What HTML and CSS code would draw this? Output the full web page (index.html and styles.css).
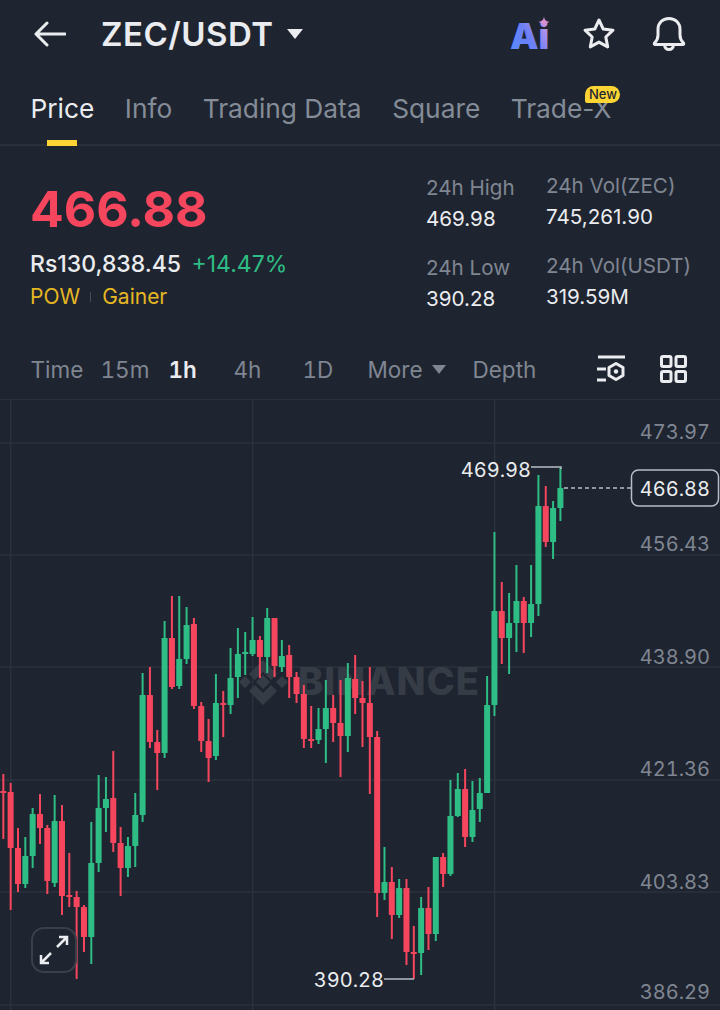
FILE: index.html
```html
<!DOCTYPE html>
<html lang="en">
<head>
  <meta charset="UTF-8" />
  <title>ZEC/USDT</title>
  <link rel="stylesheet" href="styles.css">
</head>
<body>

  <header class="topbar">
    <svg class="back-icon" width="32" height="26" viewBox="0 0 32 26">
      <path d="M13 2 2 13l11 11M2 13h29" />
    </svg>
    <h1 class="pair">ZEC/USDT</h1>
    <span class="caret caret-title"></span>
    <div class="top-icons">
      <div class="ai-logo">
        <svg width="46" height="46" viewBox="0 0 46 46">
          <defs>
            <linearGradient id="aiFill" x1="0" y1="1" x2="1" y2="0.2">
              <stop offset="0" stop-color="#4f8dff" />
              <stop offset="0.55" stop-color="#6f7ff5" />
              <stop offset="1" stop-color="#c99be8" />
            </linearGradient>
          </defs>
          <text x="1" y="38" class="ai-text" fill="url(#aiFill)">Ai</text>
          <path class="ai-spark" d="M35 5.500c.6 3.400 1.700 4.500 5.500 5.500-3.800 1-4.900 2.100-5.500 5.500-.6-3.400-1.700-4.500-5.500-5.500 3.800-1 4.900-2.100 5.500-5.500z" />
        </svg>
      </div>
      <svg class="line-icon star-icon" width="34" height="34" viewBox="0 0 34 34">
        <path d="M17 3l4.200 9 9.800 1.200-7.200 6.800 1.900 9.900L17 25.100l-8.700 4.800 1.900-9.900L3 13.200 12.800 12z" />
      </svg>
      <svg class="line-icon bell-icon" width="36" height="36" viewBox="0 0 36 36">
        <path d="M3.500 27c2.500-2.400 3.500-4.500 3.500-8v-5.500C7 7 11.500 2.500 18 2.500S29 7 29 13.500V19c0 3.500 1 5.600 3.500 8 .6.800.2 1.500-.8 1.500H4.300c-1 0-1.400-.7-.8-1.500zM13.500 29c.4 2.800 2.200 4.500 4.500 4.500s4.100-1.700 4.500-4.500" />
      </svg>
    </div>
  </header>

  <nav class="tabs">
    <a class="tab tab-active">Price</a>
    <a class="tab">Info</a>
    <a class="tab">Trading Data</a>
    <a class="tab">Square</a>
    <a class="tab tab-new">Trade-X<span class="new-badge">New</span></a>
  </nav>

  <section class="stats">
    <div class="stats-main">
      <div class="last-price">466.88</div>
      <div class="fiat-row">
        <span class="fiat">Rs130,838.45</span>
        <span class="change">+14.47%</span>
      </div>
      <div class="tag-row">
        <span>POW</span>
        <i class="tag-sep"></i>
        <span>Gainer</span>
      </div>
    </div>
    <div class="stats-col stats-col-a">
      <div class="stat-label">24h High</div>
      <div class="stat-value">469.98</div>
      <div class="stat-label stat-second">24h Low</div>
      <div class="stat-value">390.28</div>
    </div>
    <div class="stats-col stats-col-b">
      <div class="stat-label">24h Vol(ZEC)</div>
      <div class="stat-value">745,261.90</div>
      <div class="stat-label stat-second">24h Vol(USDT)</div>
      <div class="stat-value">319.59M</div>
    </div>
  </section>

  <div class="intervals">
    <span>Time</span>
    <span>15m</span>
    <span class="interval-active">1h</span>
    <span>4h</span>
    <span>1D</span>
    <span class="interval-more">More<span class="caret caret-more"></span></span>
    <span>Depth</span>
    <svg class="tool-icon" width="29" height="28" viewBox="0 0 29 28">
      <path d="M1 2h27M0 14h9M0 25h9" />
      <path d="M19 8.500l7 4v8l-7 4-7-4v-8z" />
      <circle class="tool-dot" cx="19" cy="16.500" r="2.200" />
    </svg>
    <svg class="tool-icon" width="27" height="28" viewBox="0 0 27 28">
      <rect x="1.500" y="1.500" width="9.500" height="10" rx="1.500" />
      <rect x="16" y="1.500" width="9.500" height="10" rx="1.500" />
      <rect x="1.500" y="16.500" width="9.500" height="10" rx="1.500" />
      <rect x="16" y="16.500" width="9.500" height="10" rx="1.500" />
    </svg>
  </div>

  <main class="chart">
    <svg id="chartSvg" class="chart-svg" width="720" height="610" viewBox="0 400 720 610"></svg>
    <button class="expand-btn">
      <svg width="32" height="32" viewBox="0 0 32 32">
        <path d="M19 13 29 3M21 3h8v8M13 19 3 29M3 21v8h8" />
      </svg>
    </button>
  </main>

  <script src="chart.js"></script>
</body>
</html>
```

FILE: styles.css
```css
* {
  margin: 0;
  padding: 0;
  box-sizing: border-box;
}

body {
  width: 720px;
  height: 1010px;
  overflow: hidden;
  background: #1f2530;
  font-family: Inter, 'Noto Sans', sans-serif;
  color: #eaecef;
}

/* top bar */
.topbar {
  display: flex;
  align-items: center;
  height: 68px;
  padding-left: 34px;
}

.back-icon path {
  fill: none;
  stroke: #eaecef;
  stroke-width: 3;
  stroke-linecap: round;
  stroke-linejoin: round;
}

.pair {
  margin-left: 35px;
  font-size: 33px;
  font-weight: 600;
  letter-spacing: 0.5px;
  line-height: 36px;
}

.caret {
  display: inline-block;
  width: 0;
  height: 0;
  border-style: solid;
  border-color: transparent;
  border-bottom-width: 0;
}

.caret-title {
  margin-left: 13px;
  border-width: 10px 8px 0;
  border-top-color: #eaecef;
}

.top-icons {
  display: flex;
  align-items: center;
  margin-left: auto;
  padding-right: 33px;
}

.ai-logo {
  display: flex;
  margin-right: 27px;
}

.ai-text {
  font-size: 36px;
  font-weight: 900;
}

.ai-spark {
  fill: #d78fd0;
}

.line-icon path {
  fill: none;
  stroke: #eaecef;
  stroke-width: 3;
  stroke-linejoin: round;
  stroke-linecap: round;
}

.bell-icon {
  margin-left: 35px;
}

/* tabs */
.tabs {
  display: flex;
  gap: 30.5px;
  height: 78px;
  padding: 23px 0 0 30.5px;
  border-bottom: 2px solid #2a303a;
}

.tab {
  position: relative;
  font-size: 26.3px;
  line-height: 36px;
  color: #848c98;
}

.tab-active {
  color: #eaecef;
}

.tab-active::after {
  content: "";
  position: absolute;
  left: 16px;
  bottom: -2px;
  width: 30px;
  height: 6px;
  background: #fcd535;
}

.new-badge {
  position: absolute;
  top: -5px;
  right: -9px;
  padding: 0 3.5px;
  border-radius: 9px 9px 9px 3px;
  background: #fcd535;
  color: #1f2530;
  font-size: 13px;
  font-weight: 500;
  line-height: 17px;
}

/* stats */
.stats {
  display: flex;
  height: 197px;
  padding-left: 30px;
}

.stats-main {
  width: 396px;
}

.last-price {
  margin-top: 32px;
  font-size: 50px;
  font-weight: 700;
  line-height: 62px;
  color: #f6465d;
}

.fiat-row {
  margin-top: 10px;
  font-size: 23px;
  line-height: 28px;
}

.fiat {
  font-weight: 500;
}

.change {
  margin-left: 4px;
  color: #2ebd85;
}

.tag-row {
  display: flex;
  align-items: center;
  margin-top: 5px;
  font-size: 21px;
  line-height: 28px;
  color: #e6b722;
}

.tag-sep {
  width: 1px;
  height: 10px;
  margin: 0 11px 0 10px;
  background: #474d57;
}

.stats-col {
  font-size: 20.6px;
  line-height: 28px;
}

.stats-col-a {
  width: 120px;
  padding-top: 28px;
}

.stats-col-b {
  padding-top: 26px;
}

.stat-label {
  color: #7f8692;
}

.stat-value {
  margin-top: 3px;
  color: #eaecef;
}

.stat-second {
  margin-top: 21px;
}

/* interval row */
.intervals {
  display: grid;
  grid-template-columns: 70px 68px 65px 69px 65px 105px 124px 63px 27px;
  align-items: center;
  height: 56px;
  padding: 0 0 4px 30.5px;
  font-size: 22.5px;
  font-variant-numeric: tabular-nums;
  color: #7f8692;
}

.interval-active {
  color: #eaecef;
  font-weight: 600;
}

.interval-more {
  display: flex;
  align-items: center;
}

.caret-more {
  margin-left: 9px;
  border-width: 9px 7px 0;
  border-top-color: #7f8692;
}

.tool-icon path,
.tool-icon rect {
  fill: none;
  stroke: #eaecef;
  stroke-width: 3;
  stroke-linejoin: round;
}

.tool-dot {
  fill: #eaecef;
}

/* chart */
.chart {
  position: relative;
  height: 611px;
  border-top: 1px solid #2a303a;
}

.chart-svg {
  display: block;
}

.grid-line {
  stroke: #2c323c;
  stroke-width: 1.500;
}

.wick-up,
.wick-down {
  stroke-width: 2;
}

.wick-up {
  stroke: #2ebd85;
}

.wick-down {
  stroke: #f6465d;
}

.body-up {
  fill: #2ebd85;
}

.body-down {
  fill: #f6465d;
}

.axis-label,
.mark-label {
  font-size: 20px;
  font-variant-numeric: tabular-nums;
  text-anchor: end;
}

.axis-label {
  fill: #7f8692;
}

.mark-label {
  fill: #eaecef;
}

.mark-line {
  fill: none;
  stroke: #b7bdc6;
  stroke-width: 1.500;
}

.price-line {
  stroke: #b7bdc6;
  stroke-width: 1.500;
  stroke-dasharray: 4 3;
}

.price-box {
  fill: #1f2530;
  stroke: #b7bdc6;
  stroke-width: 1.500;
}

.watermark {
  font-size: 38px;
  font-weight: 800;
  letter-spacing: 1px;
  fill: #363c46;
}

.watermark-logo {
  fill: #363c46;
}

.expand-btn {
  position: absolute;
  left: 31px;
  top: 527px;
  display: flex;
  align-items: center;
  justify-content: center;
  width: 46px;
  height: 46px;
  background: transparent;
  border: 2px solid #3a404a;
  border-radius: 13px;
}

.expand-btn path {
  fill: none;
  stroke: #eaecef;
  stroke-width: 2.500;
}
```

FILE: chart.js
```js
const svg = document.getElementById('chartSvg');
const NS = 'http://www.w3.org/2000/svg';

// wick top, body top, body bottom, wick bottom (page y), up or down
const candles = [
  [774, 791, 793, 839, 'd'], [783, 792, 848, 910, 'd'], [828, 848, 884, 892, 'd'], [837, 856, 884, 888, 'u'],
  [808, 814, 856, 868, 'u'], [794, 814, 828, 844, 'd'], [825, 828, 881, 894, 'd'], [795, 821, 883, 887, 'u'],
  [805, 821, 896, 915, 'd'], [853, 895, 897, 907, 'd'], [891, 897, 907, 979, 'd'], [905, 907, 937, 952, 'd'],
  [822, 863, 937, 964, 'u'], [775, 808, 863, 872, 'u'], [777, 799, 808, 832, 'u'], [751, 798, 843, 852, 'd'],
  [827, 843, 868, 896, 'd'], [837, 846, 868, 877, 'u'], [793, 815, 846, 867, 'u'], [673, 695, 815, 822, 'u'],
  [667, 695, 742, 748, 'd'], [730, 742, 753, 790, 'd'], [621, 638, 753, 758, 'u'], [596, 638, 687, 689, 'd'],
  [596, 659, 686, 689, 'u'], [607, 625, 659, 664, 'u'], [618, 624, 706, 709, 'd'], [702, 706, 741, 752, 'd'],
  [719, 741, 758, 782, 'd'], [674, 703, 756, 760, 'u'], [691, 703, 705, 737, 'd'], [648, 678, 705, 714, 'u'],
  [628, 654, 677, 698, 'u'], [632, 652, 654, 675, 'u'], [617, 640, 654, 656, 'u'], [636, 640, 657, 678, 'd'],
  [608, 618, 657, 673, 'u'], [618, 618, 666, 677, 'd'], [640, 656, 667, 672, 'u'], [645, 655, 677, 698, 'd'],
  [672, 677, 694, 703, 'd'], [685, 694, 739, 748, 'd'], [706, 739, 741, 748, 'd'], [708, 729, 740, 744, 'u'],
  [680, 708, 729, 763, 'u'], [695, 708, 723, 742, 'd'], [680, 723, 736, 777, 'd'], [663, 678, 736, 752, 'u'],
  [655, 679, 698, 714, 'd'], [681, 698, 703, 747, 'd'], [667, 703, 737, 794, 'd'], [731, 737, 893, 917, 'd'],
  [847, 882, 893, 900, 'u'], [867, 882, 915, 939, 'd'], [879, 888, 915, 918, 'u'], [879, 888, 952, 965, 'd'],
  [926, 952, 954, 979, 'd'], [897, 908, 953, 975, 'u'], [887, 908, 934, 950, 'd'], [857, 857, 934, 941, 'u'],
  [853, 857, 874, 887, 'd'], [780, 816, 874, 876, 'u'], [773, 789, 816, 817, 'u'], [769, 789, 837, 847, 'd'],
  [781, 810, 837, 842, 'u'], [778, 793, 809, 822, 'u'], [676, 705, 793, 793, 'u'], [532, 611, 705, 716, 'u'],
  [582, 611, 638, 664, 'd'], [593, 623, 638, 674, 'u'], [565, 601, 623, 652, 'u'], [597, 601, 623, 653, 'd'],
  [565, 604, 623, 637, 'u'], [475, 506, 604, 616, 'u'], [486, 506, 542, 547, 'd'], [501, 508, 542, 559, 'u'],
  [468, 488, 508, 521, 'u']
];

const axis = [[473.97, 431], [456.43, 543], [438.90, 656], [421.36, 768], [403.83, 881], [386.29, 991]];

function add(tag, attrs, text) {
  const el = document.createElementNS(NS, tag);
  for (const k in attrs) el.setAttribute(k, attrs[k]);
  if (text) el.textContent = text;
  svg.appendChild(el);
  return el;
}

// grid
[443, 555, 667, 780, 892, 1005].forEach(y => {
  add('line', { x1: 0, x2: 720, y1: y, y2: y, class: 'grid-line' });
});
[10.7, 252.7, 494.7].forEach(x => {
  add('line', { x1: x, x2: x, y1: 400, y2: 1010, class: 'grid-line' });
});

// watermark
add('path', {
  class: 'watermark-logo',
  d: 'M263 660l14 14-6 6-8-8-8 8-6-6zM263 675l7 7-7 7-7-7zM245 676l6 6-6 6-6-6zM282 676l6 6-6 6-6-6zM263 705l-14-14 6-6 8 8 8-8 6 6z'
});
add('text', { x: 298, y: 695, class: 'watermark' }, 'BINANCE');

// candles
candles.forEach((c, i) => {
  const x = 3.33 + i * 7.33;
  const up = c[4] === 'u';
  add('line', { x1: x, x2: x, y1: c[0], y2: c[3], class: up ? 'wick-up' : 'wick-down' });
  add('rect', {
    x: x - 3, y: c[1], width: 6, height: Math.max(c[2] - c[1], 2), rx: 0.5,
    class: up ? 'body-up' : 'body-down'
  });
});

// price axis
axis.forEach(a => {
  add('text', { x: 710, y: a[1] + 8, class: 'axis-label' }, a[0].toFixed(2));
});

// high / low marks
add('path', { class: 'mark-line', d: 'M531 467h30v2' });
add('text', { x: 531, y: 477, class: 'mark-label' }, '469.98');
add('path', { class: 'mark-line', d: 'M384 979h30' });
add('text', { x: 384, y: 987, class: 'mark-label' }, '390.28');

// last price
add('line', { x1: 564, x2: 632, y1: 488, y2: 488, class: 'price-line' });
add('rect', { x: 631.5, y: 470, width: 87, height: 36, rx: 7, class: 'price-box' });
add('text', { x: 710, y: 496, class: 'mark-label' }, '466.88');
```
